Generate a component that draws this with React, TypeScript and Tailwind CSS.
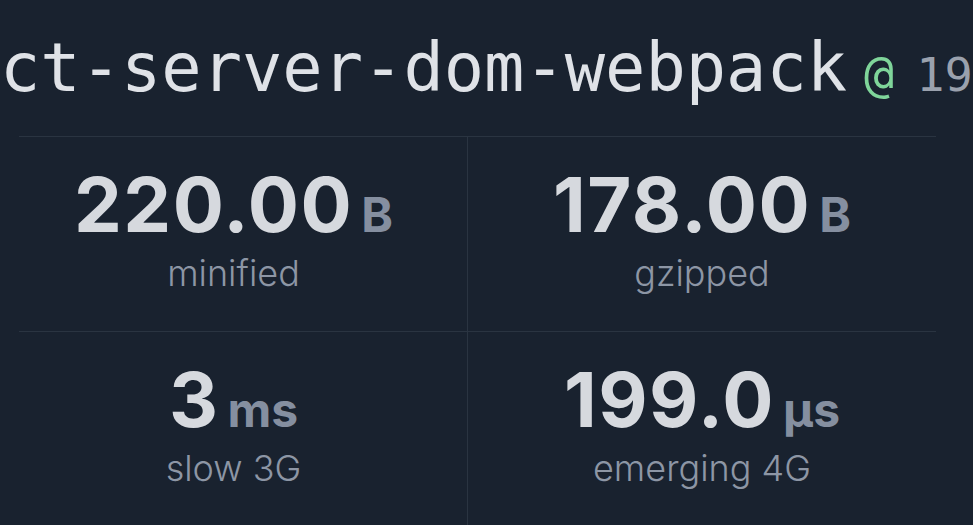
const STATS = [
  [
    { value: "220.00", unit: "B", label: "minified" },
    { value: "178.00", unit: "B", label: "gzipped" },
  ],
  [
    { value: "3", unit: "ms", label: "slow 3G" },
    { value: "199.0", unit: "µs", label: "emerging 4G" },
  ],
];

function Stat({ value, unit, label }: { value: string; unit: string; label: string }) {
  return (
    <div className="flex flex-col items-center pt-[29px]">
      <div className="flex items-baseline leading-none">
        <span className="text-[76px] font-bold tracking-[1.5px] text-[#d6d9de]">{value}</span>
        <span className="ml-[8px] text-[48px] font-bold text-[#858fa0]">{unit}</span>
      </div>
      <div className="mt-[13px] text-[36px] leading-none font-light text-[#8d96a5]">{label}</div>
    </div>
  );
}

export default function App() {
  return (
    <div className="w-[973px] h-[525px] overflow-hidden bg-[#19222f]" style={{ fontFamily: "Inter, 'Noto Sans', sans-serif" }}>
      {/* package name, clipped like the original */}
      <div className="h-[136px] overflow-hidden whitespace-nowrap pt-[35px]">
        <div
          className="ml-[-121px] flex items-baseline leading-[66px] text-[67px] text-[#dfe2e7]"
          style={{ fontFamily: "'DejaVu Sans Mono', monospace" }}
        >
          <span>react-server-dom-webpack</span>
          <span className="ml-[17px] text-[50px] text-[#7fd59a]">@</span>
          <span className="ml-[22px] text-[47px] text-[#9aa1ad]">19.0.0</span>
        </div>
      </div>

      {STATS.map((row, i) => (
        <div key={i}>
          <div className="ml-[19px] w-[917px] h-px bg-[#2a3441]" />
          <div className="flex h-[194px]">
            <div className="w-[467px]">
              <Stat {...row[0]} />
            </div>
            <div className="w-[469px] border-l border-[#2a3441]">
              <Stat {...row[1]} />
            </div>
          </div>
        </div>
      ))}
    </div>
  );
}
